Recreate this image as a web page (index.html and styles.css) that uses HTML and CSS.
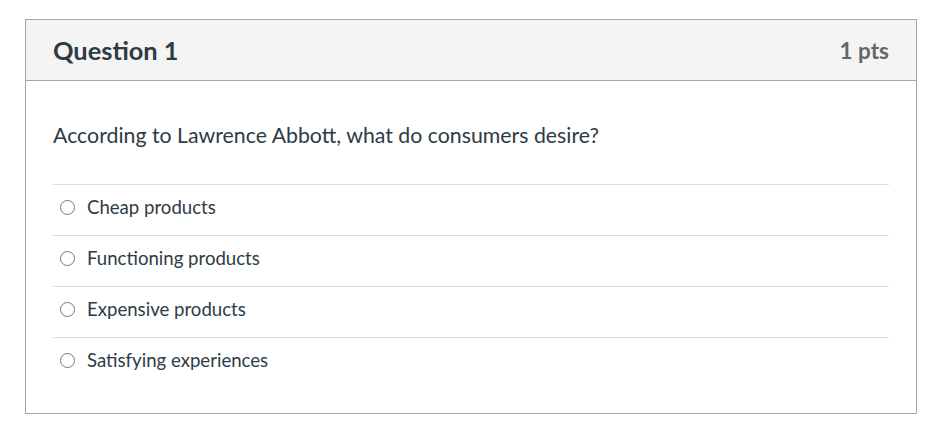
FILE: index.html
```html
<!DOCTYPE html>
<html>
<head>
<meta charset="utf-8">
<link rel="stylesheet" href="styles.css">
</head>
<body>
<div class="card">
  <div class="header">
    <h2 class="title">Question 1</h2>
    <span class="pts">1 pts</span>
  </div>
  <div class="body">
    <p class="question">According to Lawrence Abbott, what do consumers desire?</p>
    <div class="answers">
      <label class="answer"><span class="radio"></span><span class="label">Cheap products</span></label>
      <label class="answer"><span class="radio"></span><span class="label">Functioning products</span></label>
      <label class="answer"><span class="radio"></span><span class="label">Expensive products</span></label>
      <label class="answer"><span class="radio"></span><span class="label">Satisfying experiences</span></label>
    </div>
  </div>
</div>
</body>
</html>
```

FILE: styles.css
```css
html, body {
  margin: 0;
  padding: 0;
  background: #fff;
}
body {
  padding: 19px 9px 0 25px;
  font-family: Lato, "Liberation Sans", sans-serif;
  color: #2d3b45;
}
.card {
  border: 1px solid #a5a5a5;
  height: 395px;
  box-sizing: border-box;
}
.header {
  height: 60px;
  background: #f4f4f4;
  border-bottom: 1px solid #a5a5a5;
  display: flex;
  align-items: center;
  justify-content: space-between;
  padding: 0 27px 0 27px;
}
.title {
  margin: 0;
  font-size: 25.4px;
  font-weight: 700;
  color: #2d3b45;
}
.pts {
  font-size: 22.5px;
  font-weight: 700;
  color: #666;
}
.body {
  padding: 0 27px;
}
.question {
  margin: 0;
  padding: 41px 0 36px 0;
  font-size: 21.3px;
  line-height: 26px;
}
.answers {
  display: flex;
  flex-direction: column;
}
.answer {
  display: flex;
  align-items: center;
  box-sizing: content-box;
  border-top: 1px solid #ddd;
  padding: 0 0 6px 7px;
  height: 44px;
  gap: 12px;
  font-size: 18.6px;
}
.radio {
  width: 15px;
  height: 15px;
  border: 1px solid #767676;
  border-radius: 50%;
  box-sizing: border-box;
  flex: none;
}
.label {
  color: #2d3b45;
}
```
